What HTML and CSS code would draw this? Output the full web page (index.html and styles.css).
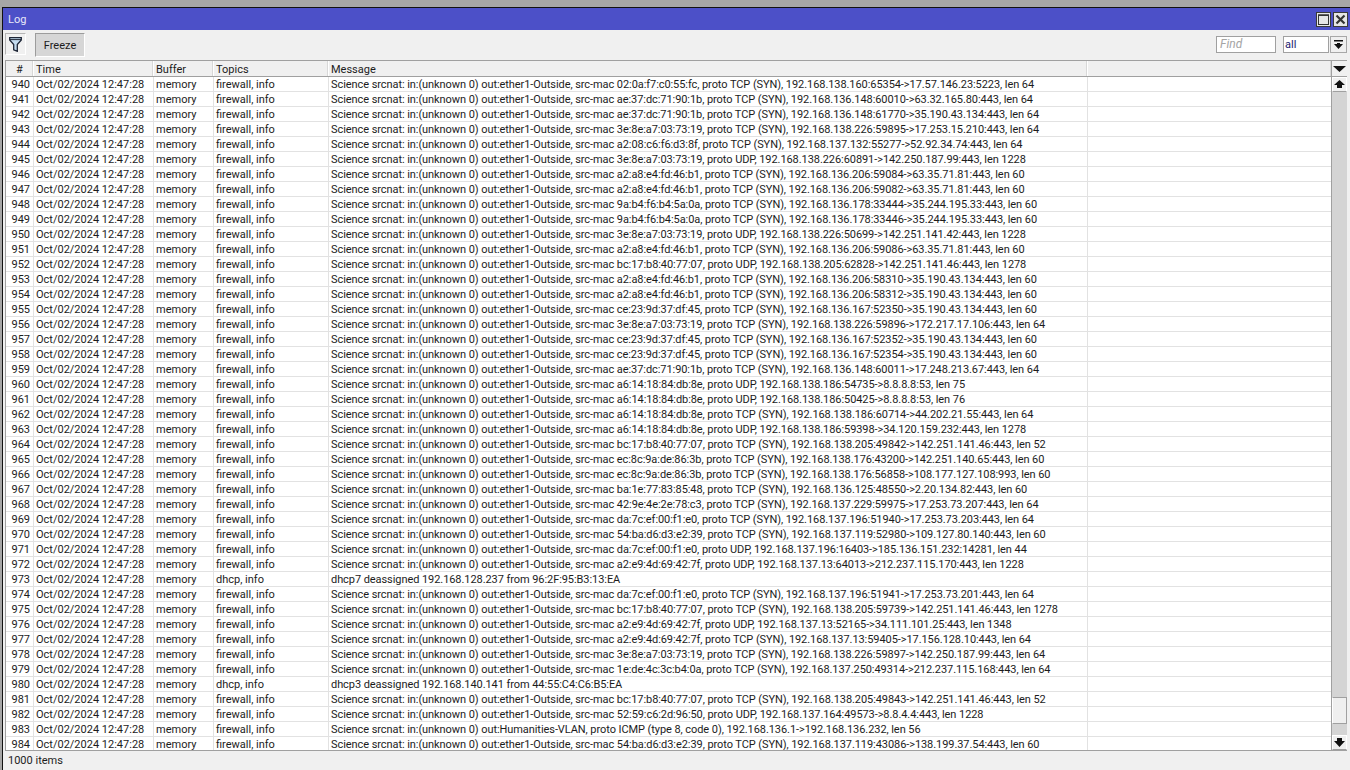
FILE: index.html
```html
<!DOCTYPE html>
<html lang="en">
<head>
<meta charset="utf-8">
<title>Log</title>
<link rel="stylesheet" href="styles.css">
</head>
<body>
<div class="window">
  <div class="titlebar">
    <span class="title">Log</span>
    <div class="winbtns">
      <button class="winbtn"><svg width="11" height="11" viewBox="0 0 11 11"><rect x="0.5" y="1" width="10" height="9.5" fill="none" stroke="#333" stroke-width="1"/><rect x="0" y="0.5" width="11" height="1.500" fill="#333"/></svg></button>
      <button class="winbtn"><svg width="11" height="11" viewBox="0 0 11 11"><path d="M1.500 1.500L9.500 9.500M9.500 1.500L1.500 9.500" stroke="#333" stroke-width="2.200" fill="none"/></svg></button>
    </div>
  </div>
  <div class="toolbar">
    <button class="filterbtn"><svg width="13" height="15" viewBox="0 0 13 15"><path d="M0.700 0.700H12.300V3L8.300 7.500V14.300L4.700 12.800V7.500L0.700 3Z" fill="#c4dcf0" stroke="#1e2636" stroke-width="1.300"/><path d="M1 2.600H12" stroke="#1e2636"/></svg></button>
    <button class="freeze">Freeze</button>
    <div class="spacer"></div>
    <div class="find">Find</div>
    <div class="select">all</div>
    <button class="selbtn"><svg width="11" height="11" viewBox="0 0 11 11"><path d="M1 1H10V2.500H1ZM1 5H4V4H7V5H10L5.500 10Z" fill="#111"/></svg></button>
  </div>
  <div class="tablewrap">
    <div class="grid">
      <div class="row head"><div class="num">#</div><div>Time</div><div>Buffer</div><div>Topics</div><div>Message</div><div></div></div>
      <div class="row"><div class="num">940</div><div>Oct/02/2024 12:47:28</div><div>memory</div><div>firewall, info</div><div class="msg">Science srcnat: in:(unknown 0) out:ether1-Outside, src-mac 02:0a:f7:c0:55:fc, proto TCP (SYN), 192.168.138.160:65354-&gt;17.57.146.23:5223, len 64</div><div></div></div>
      <div class="row"><div class="num">941</div><div>Oct/02/2024 12:47:28</div><div>memory</div><div>firewall, info</div><div class="msg">Science srcnat: in:(unknown 0) out:ether1-Outside, src-mac ae:37:dc:71:90:1b, proto TCP (SYN), 192.168.136.148:60010-&gt;63.32.165.80:443, len 64</div><div></div></div>
      <div class="row"><div class="num">942</div><div>Oct/02/2024 12:47:28</div><div>memory</div><div>firewall, info</div><div class="msg">Science srcnat: in:(unknown 0) out:ether1-Outside, src-mac ae:37:dc:71:90:1b, proto TCP (SYN), 192.168.136.148:61770-&gt;35.190.43.134:443, len 64</div><div></div></div>
      <div class="row"><div class="num">943</div><div>Oct/02/2024 12:47:28</div><div>memory</div><div>firewall, info</div><div class="msg">Science srcnat: in:(unknown 0) out:ether1-Outside, src-mac 3e:8e:a7:03:73:19, proto TCP (SYN), 192.168.138.226:59895-&gt;17.253.15.210:443, len 64</div><div></div></div>
      <div class="row"><div class="num">944</div><div>Oct/02/2024 12:47:28</div><div>memory</div><div>firewall, info</div><div class="msg">Science srcnat: in:(unknown 0) out:ether1-Outside, src-mac a2:08:c6:f6:d3:8f, proto TCP (SYN), 192.168.137.132:55277-&gt;52.92.34.74:443, len 64</div><div></div></div>
      <div class="row"><div class="num">945</div><div>Oct/02/2024 12:47:28</div><div>memory</div><div>firewall, info</div><div class="msg">Science srcnat: in:(unknown 0) out:ether1-Outside, src-mac 3e:8e:a7:03:73:19, proto UDP, 192.168.138.226:60891-&gt;142.250.187.99:443, len 1228</div><div></div></div>
      <div class="row"><div class="num">946</div><div>Oct/02/2024 12:47:28</div><div>memory</div><div>firewall, info</div><div class="msg">Science srcnat: in:(unknown 0) out:ether1-Outside, src-mac a2:a8:e4:fd:46:b1, proto TCP (SYN), 192.168.136.206:59084-&gt;63.35.71.81:443, len 60</div><div></div></div>
      <div class="row"><div class="num">947</div><div>Oct/02/2024 12:47:28</div><div>memory</div><div>firewall, info</div><div class="msg">Science srcnat: in:(unknown 0) out:ether1-Outside, src-mac a2:a8:e4:fd:46:b1, proto TCP (SYN), 192.168.136.206:59082-&gt;63.35.71.81:443, len 60</div><div></div></div>
      <div class="row"><div class="num">948</div><div>Oct/02/2024 12:47:28</div><div>memory</div><div>firewall, info</div><div class="msg">Science srcnat: in:(unknown 0) out:ether1-Outside, src-mac 9a:b4:f6:b4:5a:0a, proto TCP (SYN), 192.168.136.178:33444-&gt;35.244.195.33:443, len 60</div><div></div></div>
      <div class="row"><div class="num">949</div><div>Oct/02/2024 12:47:28</div><div>memory</div><div>firewall, info</div><div class="msg">Science srcnat: in:(unknown 0) out:ether1-Outside, src-mac 9a:b4:f6:b4:5a:0a, proto TCP (SYN), 192.168.136.178:33446-&gt;35.244.195.33:443, len 60</div><div></div></div>
      <div class="row"><div class="num">950</div><div>Oct/02/2024 12:47:28</div><div>memory</div><div>firewall, info</div><div class="msg">Science srcnat: in:(unknown 0) out:ether1-Outside, src-mac 3e:8e:a7:03:73:19, proto UDP, 192.168.138.226:50699-&gt;142.251.141.42:443, len 1228</div><div></div></div>
      <div class="row"><div class="num">951</div><div>Oct/02/2024 12:47:28</div><div>memory</div><div>firewall, info</div><div class="msg">Science srcnat: in:(unknown 0) out:ether1-Outside, src-mac a2:a8:e4:fd:46:b1, proto TCP (SYN), 192.168.136.206:59086-&gt;63.35.71.81:443, len 60</div><div></div></div>
      <div class="row"><div class="num">952</div><div>Oct/02/2024 12:47:28</div><div>memory</div><div>firewall, info</div><div class="msg">Science srcnat: in:(unknown 0) out:ether1-Outside, src-mac bc:17:b8:40:77:07, proto UDP, 192.168.138.205:62828-&gt;142.251.141.46:443, len 1278</div><div></div></div>
      <div class="row"><div class="num">953</div><div>Oct/02/2024 12:47:28</div><div>memory</div><div>firewall, info</div><div class="msg">Science srcnat: in:(unknown 0) out:ether1-Outside, src-mac a2:a8:e4:fd:46:b1, proto TCP (SYN), 192.168.136.206:58310-&gt;35.190.43.134:443, len 60</div><div></div></div>
      <div class="row"><div class="num">954</div><div>Oct/02/2024 12:47:28</div><div>memory</div><div>firewall, info</div><div class="msg">Science srcnat: in:(unknown 0) out:ether1-Outside, src-mac a2:a8:e4:fd:46:b1, proto TCP (SYN), 192.168.136.206:58312-&gt;35.190.43.134:443, len 60</div><div></div></div>
      <div class="row"><div class="num">955</div><div>Oct/02/2024 12:47:28</div><div>memory</div><div>firewall, info</div><div class="msg">Science srcnat: in:(unknown 0) out:ether1-Outside, src-mac ce:23:9d:37:df:45, proto TCP (SYN), 192.168.136.167:52350-&gt;35.190.43.134:443, len 60</div><div></div></div>
      <div class="row"><div class="num">956</div><div>Oct/02/2024 12:47:28</div><div>memory</div><div>firewall, info</div><div class="msg">Science srcnat: in:(unknown 0) out:ether1-Outside, src-mac 3e:8e:a7:03:73:19, proto TCP (SYN), 192.168.138.226:59896-&gt;172.217.17.106:443, len 64</div><div></div></div>
      <div class="row"><div class="num">957</div><div>Oct/02/2024 12:47:28</div><div>memory</div><div>firewall, info</div><div class="msg">Science srcnat: in:(unknown 0) out:ether1-Outside, src-mac ce:23:9d:37:df:45, proto TCP (SYN), 192.168.136.167:52352-&gt;35.190.43.134:443, len 60</div><div></div></div>
      <div class="row"><div class="num">958</div><div>Oct/02/2024 12:47:28</div><div>memory</div><div>firewall, info</div><div class="msg">Science srcnat: in:(unknown 0) out:ether1-Outside, src-mac ce:23:9d:37:df:45, proto TCP (SYN), 192.168.136.167:52354-&gt;35.190.43.134:443, len 60</div><div></div></div>
      <div class="row"><div class="num">959</div><div>Oct/02/2024 12:47:28</div><div>memory</div><div>firewall, info</div><div class="msg">Science srcnat: in:(unknown 0) out:ether1-Outside, src-mac ae:37:dc:71:90:1b, proto TCP (SYN), 192.168.136.148:60011-&gt;17.248.213.67:443, len 64</div><div></div></div>
      <div class="row"><div class="num">960</div><div>Oct/02/2024 12:47:28</div><div>memory</div><div>firewall, info</div><div class="msg">Science srcnat: in:(unknown 0) out:ether1-Outside, src-mac a6:14:18:84:db:8e, proto UDP, 192.168.138.186:54735-&gt;8.8.8.8:53, len 75</div><div></div></div>
      <div class="row"><div class="num">961</div><div>Oct/02/2024 12:47:28</div><div>memory</div><div>firewall, info</div><div class="msg">Science srcnat: in:(unknown 0) out:ether1-Outside, src-mac a6:14:18:84:db:8e, proto UDP, 192.168.138.186:50425-&gt;8.8.8.8:53, len 76</div><div></div></div>
      <div class="row"><div class="num">962</div><div>Oct/02/2024 12:47:28</div><div>memory</div><div>firewall, info</div><div class="msg">Science srcnat: in:(unknown 0) out:ether1-Outside, src-mac a6:14:18:84:db:8e, proto TCP (SYN), 192.168.138.186:60714-&gt;44.202.21.55:443, len 64</div><div></div></div>
      <div class="row"><div class="num">963</div><div>Oct/02/2024 12:47:28</div><div>memory</div><div>firewall, info</div><div class="msg">Science srcnat: in:(unknown 0) out:ether1-Outside, src-mac a6:14:18:84:db:8e, proto UDP, 192.168.138.186:59398-&gt;34.120.159.232:443, len 1278</div><div></div></div>
      <div class="row"><div class="num">964</div><div>Oct/02/2024 12:47:28</div><div>memory</div><div>firewall, info</div><div class="msg">Science srcnat: in:(unknown 0) out:ether1-Outside, src-mac bc:17:b8:40:77:07, proto TCP (SYN), 192.168.138.205:49842-&gt;142.251.141.46:443, len 52</div><div></div></div>
      <div class="row"><div class="num">965</div><div>Oct/02/2024 12:47:28</div><div>memory</div><div>firewall, info</div><div class="msg">Science srcnat: in:(unknown 0) out:ether1-Outside, src-mac ec:8c:9a:de:86:3b, proto TCP (SYN), 192.168.138.176:43200-&gt;142.251.140.65:443, len 60</div><div></div></div>
      <div class="row"><div class="num">966</div><div>Oct/02/2024 12:47:28</div><div>memory</div><div>firewall, info</div><div class="msg">Science srcnat: in:(unknown 0) out:ether1-Outside, src-mac ec:8c:9a:de:86:3b, proto TCP (SYN), 192.168.138.176:56858-&gt;108.177.127.108:993, len 60</div><div></div></div>
      <div class="row"><div class="num">967</div><div>Oct/02/2024 12:47:28</div><div>memory</div><div>firewall, info</div><div class="msg">Science srcnat: in:(unknown 0) out:ether1-Outside, src-mac ba:1e:77:83:85:48, proto TCP (SYN), 192.168.136.125:48550-&gt;2.20.134.82:443, len 60</div><div></div></div>
      <div class="row"><div class="num">968</div><div>Oct/02/2024 12:47:28</div><div>memory</div><div>firewall, info</div><div class="msg">Science srcnat: in:(unknown 0) out:ether1-Outside, src-mac 42:9e:4e:2e:78:c3, proto TCP (SYN), 192.168.137.229:59975-&gt;17.253.73.207:443, len 64</div><div></div></div>
      <div class="row"><div class="num">969</div><div>Oct/02/2024 12:47:28</div><div>memory</div><div>firewall, info</div><div class="msg">Science srcnat: in:(unknown 0) out:ether1-Outside, src-mac da:7c:ef:00:f1:e0, proto TCP (SYN), 192.168.137.196:51940-&gt;17.253.73.203:443, len 64</div><div></div></div>
      <div class="row"><div class="num">970</div><div>Oct/02/2024 12:47:28</div><div>memory</div><div>firewall, info</div><div class="msg">Science srcnat: in:(unknown 0) out:ether1-Outside, src-mac 54:ba:d6:d3:e2:39, proto TCP (SYN), 192.168.137.119:52980-&gt;109.127.80.140:443, len 60</div><div></div></div>
      <div class="row"><div class="num">971</div><div>Oct/02/2024 12:47:28</div><div>memory</div><div>firewall, info</div><div class="msg">Science srcnat: in:(unknown 0) out:ether1-Outside, src-mac da:7c:ef:00:f1:e0, proto UDP, 192.168.137.196:16403-&gt;185.136.151.232:14281, len 44</div><div></div></div>
      <div class="row"><div class="num">972</div><div>Oct/02/2024 12:47:28</div><div>memory</div><div>firewall, info</div><div class="msg">Science srcnat: in:(unknown 0) out:ether1-Outside, src-mac a2:e9:4d:69:42:7f, proto UDP, 192.168.137.13:64013-&gt;212.237.115.170:443, len 1228</div><div></div></div>
      <div class="row"><div class="num">973</div><div>Oct/02/2024 12:47:28</div><div>memory</div><div>dhcp, info</div><div class="msg">dhcp7 deassigned 192.168.128.237 from 96:2F:95:B3:13:EA</div><div></div></div>
      <div class="row"><div class="num">974</div><div>Oct/02/2024 12:47:28</div><div>memory</div><div>firewall, info</div><div class="msg">Science srcnat: in:(unknown 0) out:ether1-Outside, src-mac da:7c:ef:00:f1:e0, proto TCP (SYN), 192.168.137.196:51941-&gt;17.253.73.201:443, len 64</div><div></div></div>
      <div class="row"><div class="num">975</div><div>Oct/02/2024 12:47:28</div><div>memory</div><div>firewall, info</div><div class="msg">Science srcnat: in:(unknown 0) out:ether1-Outside, src-mac bc:17:b8:40:77:07, proto TCP (SYN), 192.168.138.205:59739-&gt;142.251.141.46:443, len 1278</div><div></div></div>
      <div class="row"><div class="num">976</div><div>Oct/02/2024 12:47:28</div><div>memory</div><div>firewall, info</div><div class="msg">Science srcnat: in:(unknown 0) out:ether1-Outside, src-mac a2:e9:4d:69:42:7f, proto UDP, 192.168.137.13:52165-&gt;34.111.101.25:443, len 1348</div><div></div></div>
      <div class="row"><div class="num">977</div><div>Oct/02/2024 12:47:28</div><div>memory</div><div>firewall, info</div><div class="msg">Science srcnat: in:(unknown 0) out:ether1-Outside, src-mac a2:e9:4d:69:42:7f, proto TCP (SYN), 192.168.137.13:59405-&gt;17.156.128.10:443, len 64</div><div></div></div>
      <div class="row"><div class="num">978</div><div>Oct/02/2024 12:47:28</div><div>memory</div><div>firewall, info</div><div class="msg">Science srcnat: in:(unknown 0) out:ether1-Outside, src-mac 3e:8e:a7:03:73:19, proto TCP (SYN), 192.168.138.226:59897-&gt;142.250.187.99:443, len 64</div><div></div></div>
      <div class="row"><div class="num">979</div><div>Oct/02/2024 12:47:28</div><div>memory</div><div>firewall, info</div><div class="msg">Science srcnat: in:(unknown 0) out:ether1-Outside, src-mac 1e:de:4c:3c:b4:0a, proto TCP (SYN), 192.168.137.250:49314-&gt;212.237.115.168:443, len 64</div><div></div></div>
      <div class="row"><div class="num">980</div><div>Oct/02/2024 12:47:28</div><div>memory</div><div>dhcp, info</div><div class="msg">dhcp3 deassigned 192.168.140.141 from 44:55:C4:C6:B5:EA</div><div></div></div>
      <div class="row"><div class="num">981</div><div>Oct/02/2024 12:47:28</div><div>memory</div><div>firewall, info</div><div class="msg">Science srcnat: in:(unknown 0) out:ether1-Outside, src-mac bc:17:b8:40:77:07, proto TCP (SYN), 192.168.138.205:49843-&gt;142.251.141.46:443, len 52</div><div></div></div>
      <div class="row"><div class="num">982</div><div>Oct/02/2024 12:47:28</div><div>memory</div><div>firewall, info</div><div class="msg">Science srcnat: in:(unknown 0) out:ether1-Outside, src-mac 52:59:c6:2d:96:50, proto UDP, 192.168.137.164:49573-&gt;8.8.4.4:443, len 1228</div><div></div></div>
      <div class="row"><div class="num">983</div><div>Oct/02/2024 12:47:28</div><div>memory</div><div>firewall, info</div><div class="msg">Science srcnat: in:(unknown 0) out:Humanities-VLAN, proto ICMP (type 8, code 0), 192.168.136.1-&gt;192.168.136.232, len 56</div><div></div></div>
      <div class="row last"><div class="num">984</div><div>Oct/02/2024 12:47:28</div><div>memory</div><div>firewall, info</div><div class="msg">Science srcnat: in:(unknown 0) out:ether1-Outside, src-mac 54:ba:d6:d3:e2:39, proto TCP (SYN), 192.168.137.119:43086-&gt;138.199.37.54:443, len 60</div><div></div></div>
    </div>
    <div class="scrollcol">
      <button class="colmenu"><svg width="13" height="6" viewBox="0 0 13 6"><path d="M0 0H13L6.500 6Z" fill="#111"/></svg></button>
      <button class="sbtn"><svg width="11" height="9" viewBox="0 0 11 9"><path d="M5.500 0L11 5H8V8H3V5H0Z" fill="#111"/></svg></button>
      <div class="track"><div class="thumb"></div></div>
      <button class="sbtn"><svg width="11" height="9" viewBox="0 0 11 9"><path d="M3 0H8V3H11L5.500 9L0 3H3Z" fill="#111"/></svg></button>
    </div>
  </div>
  <div class="status">1000 items</div>
</div>
</body>
</html>
```
FILE: styles.css
```css
* { box-sizing: border-box; }
html, body { margin: 0; height: 770px; overflow: hidden; }
body {
  background: #a6a6a6;
  padding: 7px 0 0 2px;
  font-family: Roboto, "Liberation Sans", Arial, sans-serif;
  font-size: 11px;
  color: #1c1c1c;
}
button { margin: 0; padding: 0; font: inherit; color: inherit; display: flex; align-items: center; justify-content: center; }
.window {
  height: 763px;
  background: #f0f0f0;
  border-top: 1px solid #111;
  border-left: 1px solid #111;
  display: flex;
  flex-direction: column;
}
.titlebar {
  height: 22px;
  flex: none;
  background: #4c50c8;
  display: flex;
  align-items: center;
  justify-content: space-between;
  padding: 0 2px 0 5px;
}
.title { color: #e8e8f8; font-size: 11px; }
.winbtns { display: flex; gap: 2px; }
.winbtn {
  width: 15px; height: 15px;
  background: #e6e6e6;
  border: 1px solid #3a3a3a;
}
.toolbar {
  height: 30px;
  flex: none;
  display: flex;
  align-items: flex-start;
  padding: 3px 3px 0 2px;
}
.filterbtn {
  width: 21px; height: 22px;
  background: #f0f0f0;
  border: 1px solid #b4b4b4;
  border-right-color: #fff;
  border-bottom-color: #fff;
}
.freeze {
  width: 50px; height: 24px;
  margin-left: 9px;
  background: #d6d6d6;
  border: 1px solid #fff;
  border-left-color: #9c9c9c;
  border-top-color: #9c9c9c;
  font-size: 11px;
}
.spacer { flex: 1; }
.find, .select {
  height: 17px;
  margin-top: 3px;
  background: #fff;
  border: 1px solid #a0a0a0;
  padding-left: 3px;
  line-height: 15px;
}
.find { width: 60px; color: #a4a4a4; font-style: italic; font-size: 12px; }
.select { width: 46px; margin-left: 7px; padding-left: 1px; color: #1c1c70; }
.selbtn {
  width: 17px; height: 17px;
  margin-top: 3px; margin-left: 1px;
  background: #f0f0f0;
  border: 1px solid #a8a8a8;
}
.tablewrap {
  flex: none;
  height: 691px;
  margin: 0 3px 0 2px;
  display: flex;
  border-top: 1px solid #a0a0a0;
  border-bottom: 1px solid #a0a0a0;
  border-left: 1px solid #a0a0a0;
  background: #fff;
}
.grid { flex: 1; min-width: 0; overflow: hidden; border-right: 1px solid #a0a0a0; }
.row {
  display: grid;
  grid-template-columns: 28px 120px 60px 115px 759px 1fr;
  height: 15px;
  line-height: 16px;
  border-bottom: 1px solid #e2e2e2;
  white-space: nowrap;
}
.row > div { padding-left: 2px; border-right: 1px solid #e2e2e2; overflow: hidden; }
.row > div:last-child { border-right: 0; }
.row > .num { padding: 0 3px 0 0; text-align: right; }
.row > .msg { letter-spacing: -0.07px; }
.head {
  height: 16px;
  line-height: 17px;
  background: #f0f0f0;
  border-bottom: 1px solid #a0a0a0;
}
.head > div { border-right-color: #fff; box-shadow: inset -1px 0 0 #d8d8d8; }
.head > .num { text-align: center; padding: 0; }
.scrollcol { width: 15px; flex: none; display: flex; flex-direction: column; background: #d4d4d4; }
.colmenu {
  height: 16px; flex: none;
  background: #f0f0f0;
  border: 0;
  border-bottom: 1px solid #a0a0a0;
}
.sbtn {
  height: 15px; flex: none;
  background: #f0f0f0;
  border: 1px solid #fff;
  border-bottom-color: #a0a0a0;
}
.track { flex: 1; display: flex; flex-direction: column; justify-content: flex-end; padding-bottom: 11px; }
.thumb {
  height: 27px;
  background: #efefef;
  border: 1px solid #a0a0a0;
  border-left-color: #fff;
  border-top-color: #a0a0a0;
}
.status {
  flex: 1;
  padding: 3px 0 0 5px;
  line-height: 14px;
}
```
